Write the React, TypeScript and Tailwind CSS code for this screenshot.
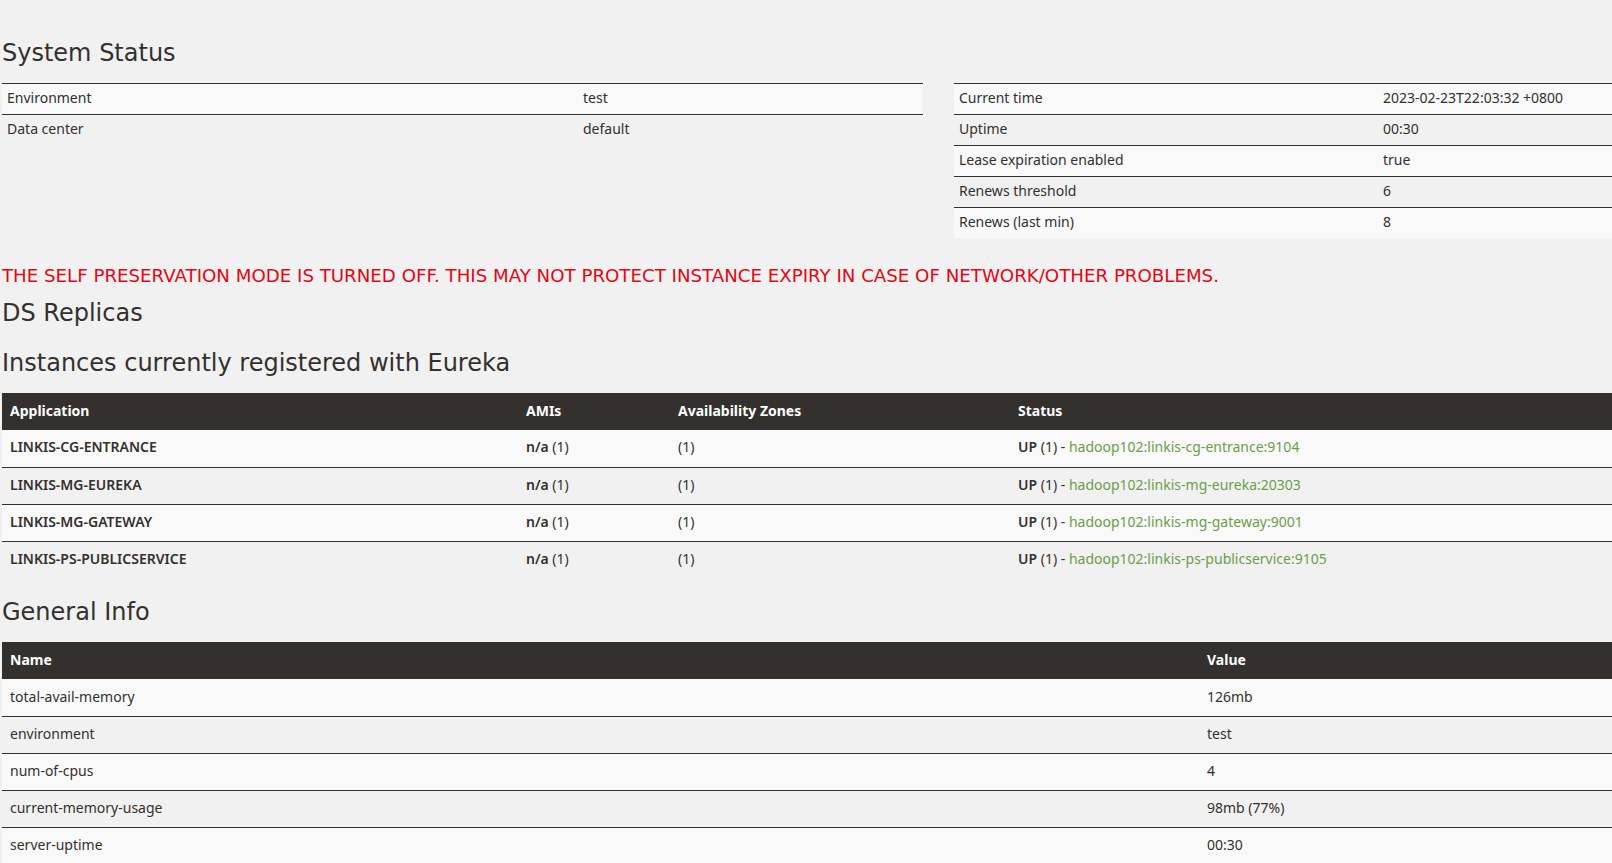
const statusLeft = [
  { name: "Environment", value: "test" },
  { name: "Data center", value: "default" },
];

const statusRight = [
  { name: "Current time", value: "2023-02-23T22:03:32 +0800" },
  { name: "Uptime", value: "00:30" },
  { name: "Lease expiration enabled", value: "true" },
  { name: "Renews threshold", value: "6" },
  { name: "Renews (last min)", value: "8" },
];

const instances = [
  { app: "LINKIS-CG-ENTRANCE", link: "hadoop102:linkis-cg-entrance:9104" },
  { app: "LINKIS-MG-EUREKA", link: "hadoop102:linkis-mg-eureka:20303" },
  { app: "LINKIS-MG-GATEWAY", link: "hadoop102:linkis-mg-gateway:9001" },
  { app: "LINKIS-PS-PUBLICSERVICE", link: "hadoop102:linkis-ps-publicservice:9105" },
];

const generalInfo = [
  { name: "total-avail-memory", value: "126mb" },
  { name: "environment", value: "test" },
  { name: "num-of-cpus", value: "4" },
  { name: "current-memory-usage", value: "98mb (77%)" },
  { name: "server-uptime", value: "00:30" },
];

function StatusTable({ rows, firstCol }: { rows: { name: string; value: string }[]; firstCol: string }) {
  return (
    <div className="flex flex-col">
      {rows.map((row, i) => (
        <div
          key={row.name}
          className={`flex h-[31px] items-center border-t border-[#34302d] pb-[3px] ${
            i % 2 === 0 ? "bg-[#f9f9f9]" : "bg-[#f1f1f1]"
          }`}
        >
          <div className={`${firstCol} shrink-0 pl-[5px]`}>{row.name}</div>
          <div className="flex-1 pl-[5px]">{row.value}</div>
        </div>
      ))}
    </div>
  );
}

function Heading({ children, className = "" }: { children: React.ReactNode; className?: string }) {
  return (
    <h2 className={`font-[family-name:DejaVu_Sans] text-[24px] leading-[28px] text-[#34302d] ${className}`}>
      {children}
    </h2>
  );
}

export default function App() {
  return (
    <div className="min-h-screen overflow-hidden bg-[#f1f1f1] pl-[2px] font-[family-name:Noto_Sans] text-[14px] text-[#34302d]">
      <Heading className="pt-[39px]">System Status</Heading>

      <div className="mt-[16px] flex gap-[31px]">
        <div className="w-[921px] shrink-0">
          <StatusTable rows={statusLeft} firstCol="w-[576px]" />
        </div>
        <div className="flex-1">
          <StatusTable rows={statusRight} firstCol="w-[424px]" />
        </div>
      </div>

      <p className="mt-[26px] font-[family-name:DejaVu_Sans] text-[18.2px] leading-[24px] text-[#e30613]">
        THE SELF PRESERVATION MODE IS TURNED OFF. THIS MAY NOT PROTECT INSTANCE EXPIRY IN CASE OF NETWORK/OTHER PROBLEMS.
      </p>

      <Heading className="mt-[11px]">DS Replicas</Heading>
      <Heading className="mt-[22px]">Instances currently registered with Eureka</Heading>

      <div className="mt-[16px]">
        <div className="flex h-[37px] items-center bg-[#34302d] pb-[3px] font-bold text-white">
          <div className="w-[516px] shrink-0 pl-[8px]">Application</div>
          <div className="w-[152px] shrink-0 pl-[8px]">AMIs</div>
          <div className="w-[340px] shrink-0 pl-[8px]">Availability Zones</div>
          <div className="flex-1 pl-[8px]">Status</div>
        </div>
        {instances.map((row, i) => (
          <div
            key={row.app}
            className={`flex h-[37px] items-center pb-[4px] ${i > 0 ? "border-t border-[#34302d]" : ""} ${
              i % 2 === 0 ? "bg-[#f9f9f9]" : "bg-[#f1f1f1]"
            }`}
          >
            <div className="w-[516px] shrink-0 pl-[8px] font-semibold">{row.app}</div>
            <div className="w-[152px] shrink-0 pl-[8px]">
              <b className="font-semibold">n/a</b> (1)
            </div>
            <div className="w-[340px] shrink-0 pl-[8px]">(1)</div>
            <div className="flex-1 pl-[8px]">
              <b className="font-semibold">UP</b> (1) -{" "}
              <a href="#" className="text-[#6b9e48]">
                {row.link}
              </a>
            </div>
          </div>
        ))}
      </div>

      <Heading className="mt-[20px]">General Info</Heading>

      <div className="mt-[16px]">
        <div className="flex h-[37px] items-center bg-[#34302d] pb-[2px] font-bold text-white">
          <div className="w-[1197px] shrink-0 pl-[8px]">Name</div>
          <div className="flex-1 pl-[8px]">Value</div>
        </div>
        {generalInfo.map((row, i) => (
          <div
            key={row.name}
            className={`flex h-[37px] items-center pb-[3px] ${i > 0 ? "border-t border-[#34302d]" : ""} ${
              i % 2 === 0 ? "bg-[#f9f9f9]" : "bg-[#f1f1f1]"
            }`}
          >
            <div className="w-[1197px] shrink-0 pl-[8px]">{row.name}</div>
            <div className="flex-1 pl-[8px]">{row.value}</div>
          </div>
        ))}
      </div>
    </div>
  );
}
